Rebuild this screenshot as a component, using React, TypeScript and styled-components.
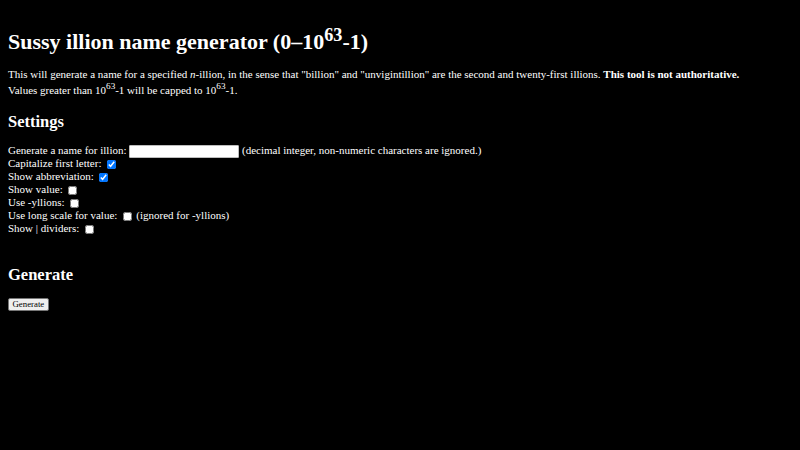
import React from "react";
import styled, { createGlobalStyle } from "styled-components";

const GlobalStyle = createGlobalStyle`
  html, body {
    margin: 0;
    padding: 0;
    background: #000;
  }
  body {
    color: #fff;
    font-family: "Liberation Serif", "Times New Roman", serif;
    font-size: 11px;
  }
`;

const Page = styled.main`
  padding: 29px 8px 0;
`;

const Title = styled.h1`
  margin: 0 0 12px;
  font-size: 22px;
  font-weight: bold;
  line-height: 25px;
`;

const Sup = styled.sup`
  font-size: 0.83em;
  line-height: 0;
  vertical-align: super;
`;

const Intro = styled.p`
  margin: 0;
  line-height: 16px;

  sup {
    line-height: 0;
  }
`;

const SectionTitle = styled.h2<{ $top: number; $bottom: number }>`
  margin: ${(p) => p.$top}px 0 ${(p) => p.$bottom}px;
  font-size: 16.5px;
  font-weight: bold;
  line-height: 19px;
`;

const Form = styled.div`
  display: flex;
  flex-direction: column;
`;

const Row = styled.div<{ $tall?: boolean }>`
  height: ${(p) => (p.$tall ? 14 : 13)}px;
  line-height: ${(p) => (p.$tall ? 14 : 13)}px;
  white-space: nowrap;
`;

const TextField = styled.input`
  box-sizing: border-box;
  width: 110px;
  height: 13px;
  margin: 0;
  padding: 0 1px;
  border: 1px solid #bdbdbd;
  border-radius: 1px;
  background: #fff;
  vertical-align: middle;
  font-size: 9px;
`;

const Check = styled.input`
  width: 8.8px;
  height: 8.8px;
  margin: 0 2px 0 2.7px;
  vertical-align: middle;
`;

const Button = styled.button`
  box-sizing: border-box;
  height: 12.5px;
  margin: 0;
  padding: 0 3.5px;
  border: 1px solid #767676;
  border-radius: 2px;
  background: #efefef;
  color: #000;
  font-family: "Liberation Serif", "Times New Roman", serif;
  font-size: 8.8px;
  line-height: 10.5px;
`;

const options: { label: string; checked: boolean; note?: string }[] = [
  { label: "Capitalize first letter:", checked: true },
  { label: "Show abbreviation:", checked: true },
  { label: "Show value:", checked: false },
  { label: "Use -yllions:", checked: false },
  { label: "Use long scale for value:", checked: false, note: "(ignored for -yllions)" },
  { label: "Show | dividers:", checked: false },
];

export default function App() {
  return (
    <>
      <GlobalStyle />
      <Page>
        <Title>
          Sussy illion name generator (0–10<Sup>63</Sup>-1)
        </Title>
        <Intro>
          This will generate a name for a specified <i>n</i>-illion, in the sense that
          "billion" and "unvigintillion" are the second and twenty-first illions.{" "}
          <b>This tool is not authoritative.</b>
          <br />
          Values greater than 10<sup>63</sup>-1 will be capped to 10<sup>63</sup>-1.
        </Intro>
        <SectionTitle $top={14} $bottom={12}>
          Settings
        </SectionTitle>
        <Form>
          <Row $tall>
            Generate a name for illion: <TextField type="text" /> (decimal integer,
            non-numeric characters are ignored.)
          </Row>
          {options.map((o) => (
            <Row key={o.label}>
              {o.label}{" "}
              <Check type="checkbox" defaultChecked={o.checked} />
              {o.note ? ` ${o.note}` : null}
            </Row>
          ))}
        </Form>
        <SectionTitle $top={30} $bottom={13}>
          Generate
        </SectionTitle>
        <Button type="button">Generate</Button>
      </Page>
    </>
  );
}
